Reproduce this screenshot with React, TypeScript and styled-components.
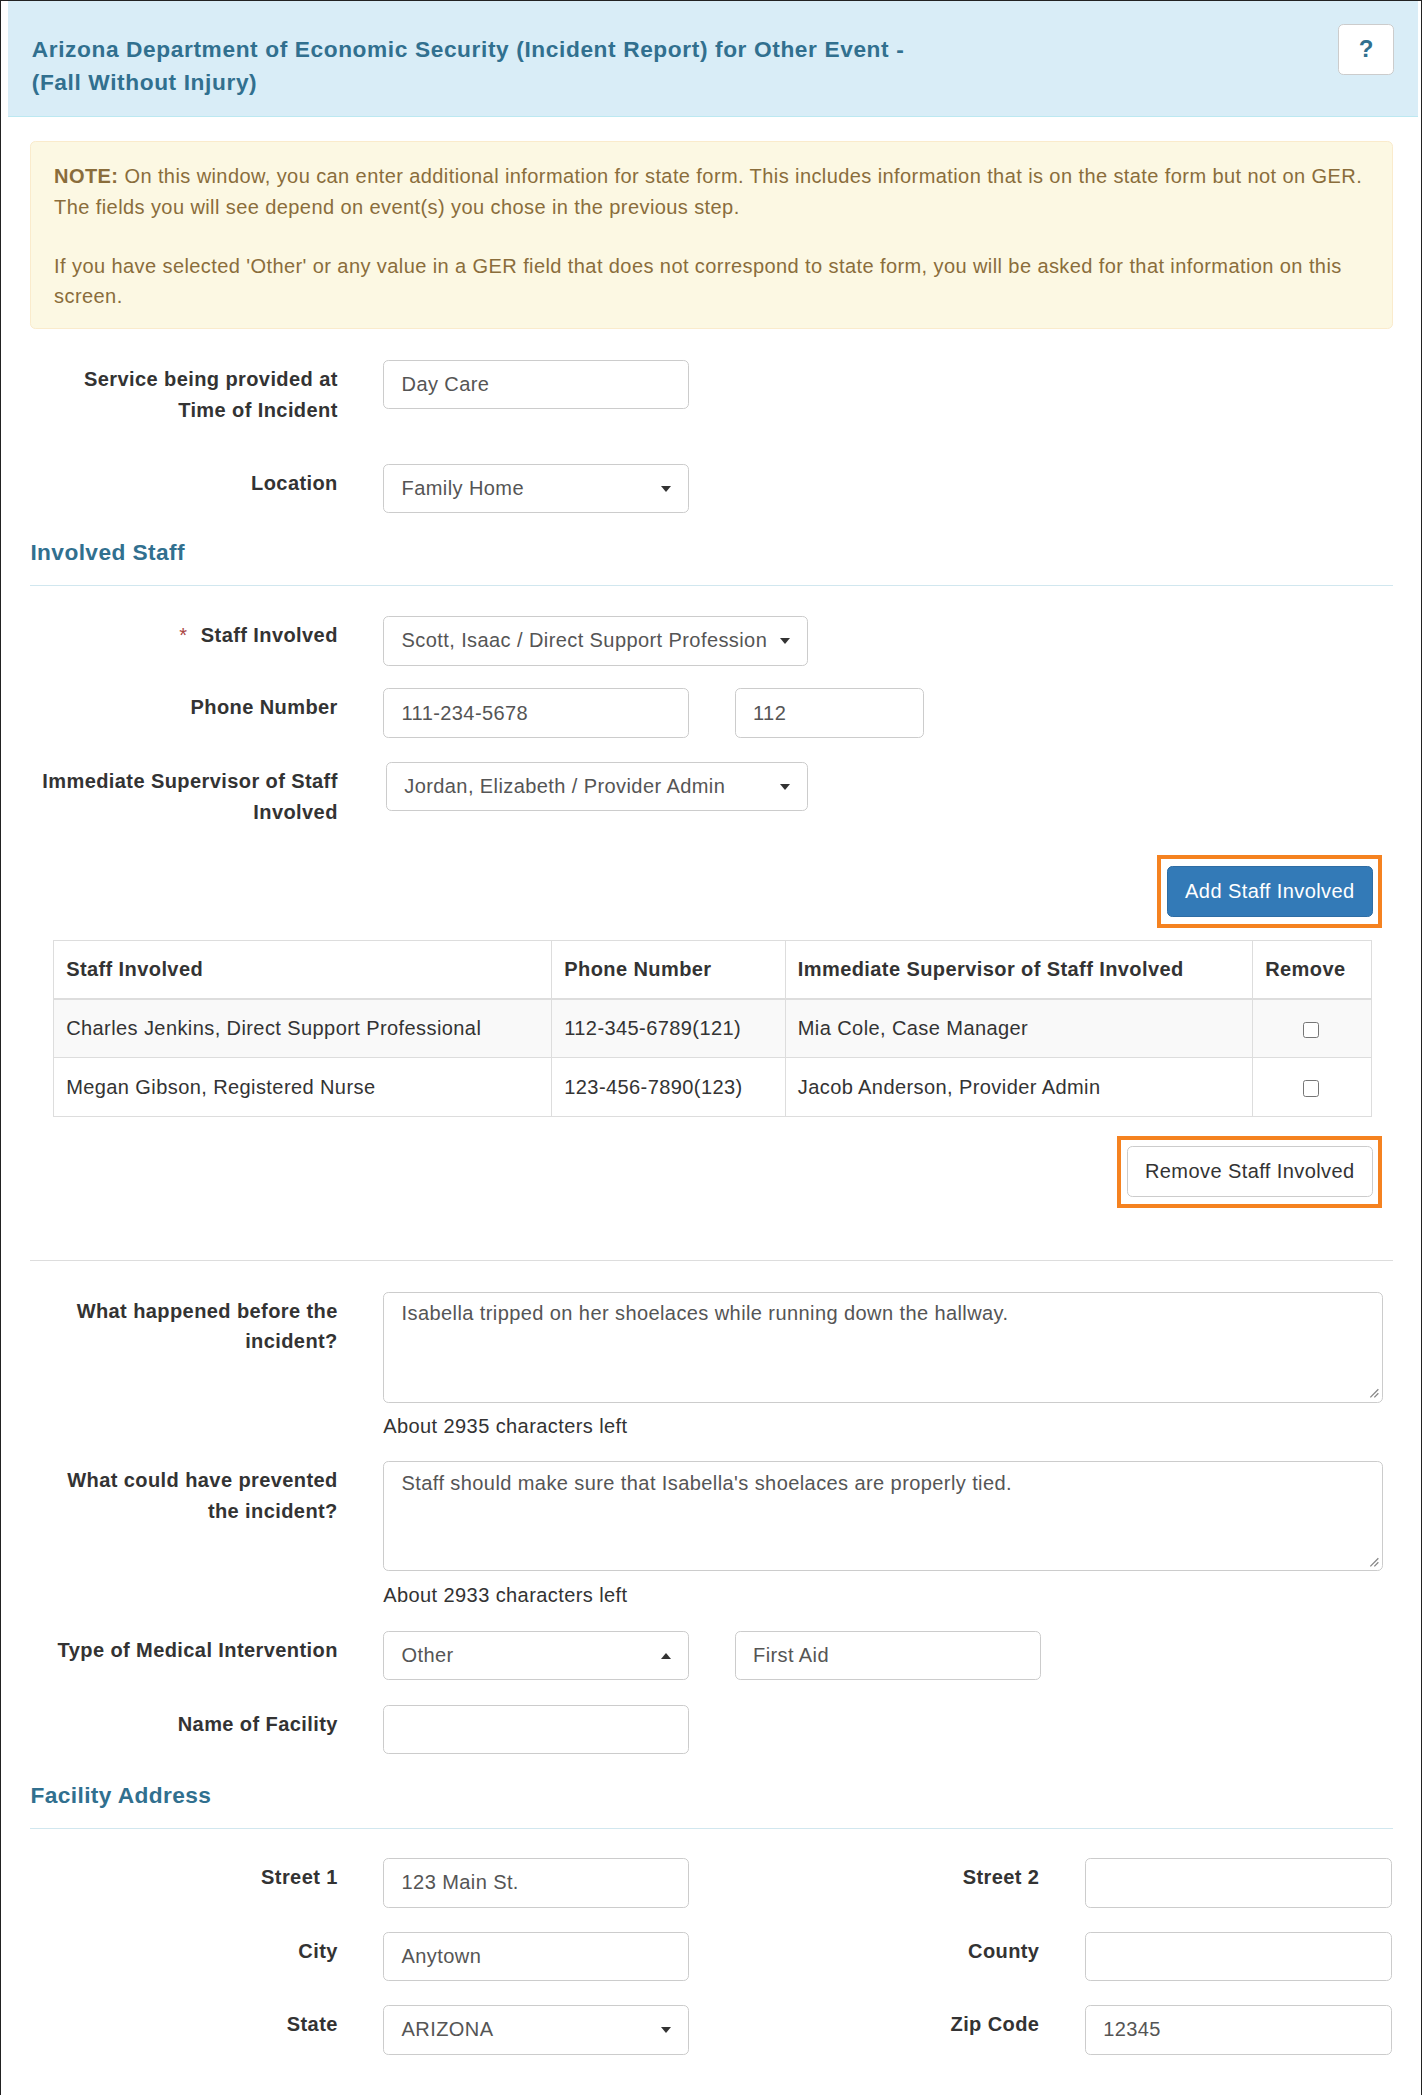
import React from "react";
import styled, { createGlobalStyle } from "styled-components";

const Global = createGlobalStyle`
  html, body { margin: 0; padding: 0; background: #fff; }
  body { font-family: "Liberation Sans", Arial, sans-serif; color: #333; font-size: 15px; letter-spacing: 0.3px; }
`;

const Zoom = styled.div`
  zoom: 1.33647;
  width: 1064px;
  height: 1568px;
  box-sizing: border-box;
  border: 1px solid #222;
  overflow: hidden;
  background: #fff;
`;

const Header = styled.div`
  background: #d9edf7;
  border-bottom: 1px solid #bce8f1;
  margin: 0 2px 0 5px;
  height: 87px;
  display: flex;
  justify-content: space-between;
  align-items: flex-start;
  padding: 0 18px 0 18px;
  box-sizing: border-box;
`;

const Title = styled.h1`
  margin: 24px 0 0;
  font-size: 17px;
  line-height: 25px;
  font-weight: bold;
  letter-spacing: 0.45px;
  color: #31708f;
`;

const HelpBtn = styled.button`
  margin-top: 17px;
  width: 42px;
  height: 38px;
  background: #fff;
  border: 1px solid #ccc;
  border-radius: 4px;
  font: bold 18px "Liberation Sans", Arial, sans-serif;
  color: #31708f;
`;

const Body = styled.div`
  padding: 18px 21px 0 22px;
`;

const Note = styled.div`
  background: #fcf8e3;
  border: 1px solid #faebcc;
  border-radius: 4px;
  color: #8a6d3b;
  line-height: 23px;
  padding: 14px 17px 12px;
  p { margin: 0; }
  p + p { margin-top: 21px; }
`;

const Row = styled.div<{ $mt?: number }>`
  display: flex;
  align-items: flex-start;
  margin-top: ${(p) => p.$mt ?? 18}px;
`;

const Label = styled.label<{ $w?: number }>`
  width: ${(p) => p.$w ?? 230}px;
  flex-shrink: 0;
  text-align: right;
  font-weight: bold;
  line-height: 23px;
  padding-top: 3px;
  margin-right: 34px;
`;

const Star = styled.span`
  color: #a94442;
  margin-right: 10px;
  font-weight: normal;
`;

const Input = styled.div<{ $w?: number; $ml?: number }>`
  width: ${(p) => p.$w ?? 229}px;
  height: 37px;
  box-sizing: border-box;
  border: 1px solid #ccc;
  border-radius: 4px;
  padding: 0 13px;
  display: flex;
  align-items: center;
  justify-content: space-between;
  color: #555;
  white-space: nowrap;
  overflow: hidden;
  margin-left: ${(p) => p.$ml ?? 0}px;
  flex-shrink: 0;
`;

const Caret = styled.span<{ $up?: boolean }>`
  width: 0;
  height: 0;
  border-left: 4px solid transparent;
  border-right: 4px solid transparent;
  ${(p) => (p.$up ? "border-bottom: 5px solid #333;" : "border-top: 5px solid #333;")}
  margin-left: 4px;
  flex-shrink: 0;
`;

const Section = styled.div<{ $mt?: number }>`
  color: #31708f;
  font-weight: bold;
  font-size: 17px;
  margin-top: ${(p) => p.$mt ?? 20}px;
  padding-bottom: 14px;
  border-bottom: 1px solid #d1e7ef;
`;

const BtnRow = styled.div<{ $mt: number }>`
  display: flex;
  justify-content: flex-end;
  margin-top: ${(p) => p.$mt}px;
  padding-right: 8px;
`;

const Highlight = styled.div`
  border: 3px solid #f58220;
  padding: 5px 4px;
`;

const Btn = styled.button<{ $primary?: boolean }>`
  height: 38px;
  padding: 0 13px;
  border-radius: 4px;
  font: 15px "Liberation Sans", Arial, sans-serif;
  letter-spacing: 0.3px;
  border: 1px solid ${(p) => (p.$primary ? "#2e6da4" : "#ccc")};
  background: ${(p) => (p.$primary ? "#337ab7" : "#fff")};
  color: ${(p) => (p.$primary ? "#fff" : "#333")};
`;

const Table = styled.table`
  margin: 9px 16px 0 17px;
  width: 987px;
  border-collapse: collapse;
  th, td {
    border: 1px solid #ddd;
    text-align: left;
    padding: 0 9px;
    height: 43px;
    white-space: nowrap;
  }
  th { border-bottom: 2px solid #ddd; }
  tbody tr:nth-child(odd) { background: #f9f9f9; }
`;

const Check = styled.span`
  display: inline-block;
  width: 11px;
  height: 11px;
  border: 1px solid #767676;
  border-radius: 2px;
  background: #fff;
  margin-left: 28px;
  vertical-align: middle;
`;

const Divider = styled.div<{ $mt: number }>`
  border-top: 1px solid #ddd;
  margin-top: ${(p) => p.$mt}px;
`;

const Area = styled.div<{ $h: number }>`
  width: 748px;
  height: ${(p) => p.$h}px;
  box-sizing: border-box;
  border: 1px solid #ccc;
  border-radius: 4px;
  padding: 7px 13px;
  color: #555;
  position: relative;
`;

const Grip = styled.svg`
  position: absolute;
  right: 2px;
  bottom: 2px;
`;

const Help = styled.div`
  margin-top: 8px;
  line-height: 20px;
`;

const Col = styled.div``;

const Half = styled.div<{ $w: number }>`
  display: flex;
  align-items: flex-start;
  width: ${(p) => p.$w}px;
  flex-shrink: 0;
`;

function TextArea({ h, text, left }: { h: number; text: string; left: string }) {
  return (
    <Col>
      <Area $h={h}>
        {text}
        <Grip width="8" height="8" viewBox="0 0 8 8">
          <path d="M7 1L1 7M7 4L4 7" stroke="#888" strokeWidth="1" />
        </Grip>
      </Area>
      <Help>{left}</Help>
    </Col>
  );
}

export default function App() {
  return (
    <>
      <Global />
      <Zoom>
        <Header>
          <Title>
            Arizona Department of Economic Security (Incident Report) for Other Event -
            <br />
            (Fall Without Injury)
          </Title>
          <HelpBtn>?</HelpBtn>
        </Header>
        <Body>
          <Note>
            <p>
              <b>NOTE:</b> On this window, you can enter additional information for state form. This
              includes information that is on the state form but not on GER. The fields you will see
              depend on event(s) you chose in the previous step.
            </p>
            <p>
              If you have selected 'Other' or any value in a GER field that does not correspond to state
              form, you will be asked for that information on this screen.
            </p>
          </Note>
          <Row $mt={23}>
            <Label>
              Service being provided at
              <br />
              Time of Incident
            </Label>
            <Input>Day Care</Input>
          </Row>
          <Row $mt={29}>
            <Label>Location</Label>
            <Input>
              Family Home <Caret />
            </Input>
          </Row>
          <Section $mt={19}>Involved Staff</Section>
          <Row $mt={23}>
            <Label>
              <Star>*</Star>Staff Involved
            </Label>
            <Input $w={318}>
              Scott, Isaac / Direct Support Profession <Caret />
            </Input>
          </Row>
          <Row $mt={17}>
            <Label>Phone Number</Label>
            <Input>111-234-5678</Input>
            <Input $w={142} $ml={34}>112</Input>
          </Row>
          <Row $mt={18}>
            <Label>
              Immediate Supervisor of Staff
              <br />
              Involved
            </Label>
            <Input $w={316} $ml={2}>
              Jordan, Elizabeth / Provider Admin <Caret />
            </Input>
          </Row>
          <BtnRow $mt={21}>
            <Highlight>
              <Btn $primary>Add Staff Involved</Btn>
            </Highlight>
          </BtnRow>
          <Table>
            <thead>
              <tr>
                <th style={{ width: 354 }}>Staff Involved</th>
                <th style={{ width: 156 }}>Phone Number</th>
                <th style={{ width: 331 }}>Immediate Supervisor of Staff Involved</th>
                <th>Remove</th>
              </tr>
            </thead>
            <tbody>
              <tr>
                <td>Charles Jenkins, Direct Support Professional</td>
                <td>112-345-6789(121)</td>
                <td>Mia Cole, Case Manager</td>
                <td>
                  <Check />
                </td>
              </tr>
              <tr>
                <td>Megan Gibson, Registered Nurse</td>
                <td>123-456-7890(123)</td>
                <td>Jacob Anderson, Provider Admin</td>
                <td>
                  <Check />
                </td>
              </tr>
            </tbody>
          </Table>
          <BtnRow $mt={14}>
            <Highlight>
              <Btn>Remove Staff Involved</Btn>
            </Highlight>
          </BtnRow>
          <Divider $mt={39} />
          <Row $mt={23}>
            <Label>
              What happened before the
              <br />
              incident?
            </Label>
            <TextArea
              h={83}
              text="Isabella tripped on her shoelaces while running down the hallway."
              left="About 2935 characters left"
            />
          </Row>
          <Row $mt={16}>
            <Label>
              What could have prevented
              <br />
              the incident?
            </Label>
            <TextArea
              h={82}
              text="Staff should make sure that Isabella's shoelaces are properly tied."
              left="About 2933 characters left"
            />
          </Row>
          <Row $mt={17}>
            <Label>Type of Medical Intervention</Label>
            <Input>
              Other <Caret $up />
            </Input>
            <Input $ml={34}>First Aid</Input>
          </Row>
          <Row $mt={18}>
            <Label>Name of Facility</Label>
            <Input />
          </Row>
          <Section $mt={21}>Facility Address</Section>
          {[
            ["Street 1", "123 Main St.", "Street 2", "", false],
            ["City", "Anytown", "County", "", false],
            ["State", "ARIZONA", "Zip Code", "12345", true],
          ].map(([l1, v1, l2, v2, sel], i) => (
            <Row $mt={i === 0 ? 22 : 18} key={String(l1)}>
              <Half $w={493}>
                <Label>{l1}</Label>
                <Input>
                  {v1}
                  {sel ? <Caret /> : null}
                </Input>
              </Half>
              <Half $w={526}>
                <Label $w={262}>{l2}</Label>
                <Input $w={230}>{v2}</Input>
              </Half>
            </Row>
          ))}
        </Body>
      </Zoom>
    </>
  );
}
